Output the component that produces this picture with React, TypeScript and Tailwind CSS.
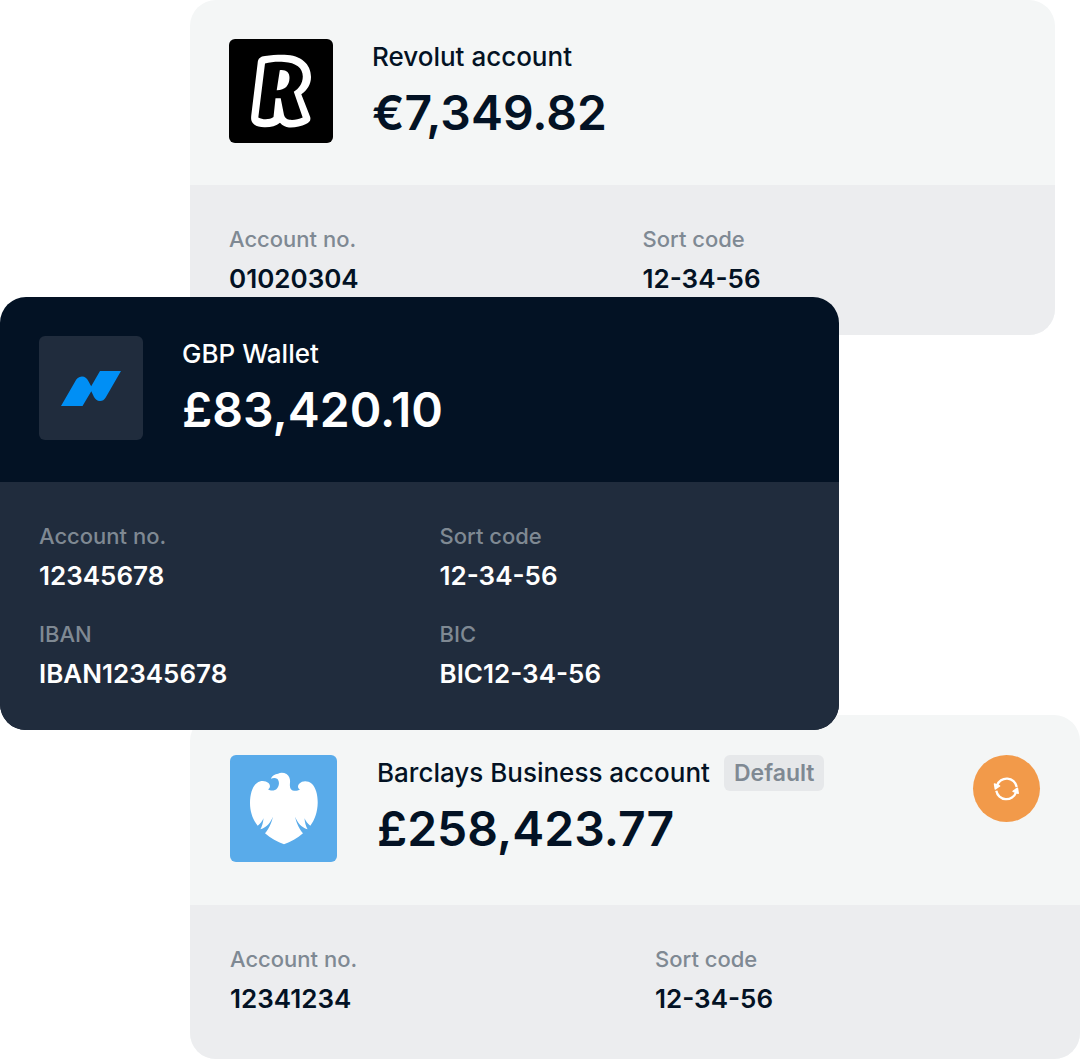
import type { ReactNode } from "react";

type Field = { label: string; value: string };

function RevolutLogo() {
  return (
    <svg viewBox="0 0 104 104" className="block h-full w-full" role="img" aria-label="Revolut">
      <rect width="104" height="104" rx="6" fill="#000" />
      <path
        fill="#fff"
        d="M28.6 24.5C29 19 31.5 17.5 36 17C42 16 49 15.6 55.5 15.7C72 16 82 25 82 38C82 45.5 78 51.5 72.3 55.2L81 77.5C82.3 81 80.5 83.5 77 85C72 87.5 66 88.8 60 88.5C56.500 88.300 53.500 86.500 51 83.700C47.500 86.800 42 88.200 36.500 88.300C31 88.500 26.500 87.400 23.700 84C21.800 81.500 22 79 22.300 76Z"
      />
      <path
        fill="#000"
        d="M36 24.5C42 22.800 49 22.600 55 23C67 23.700 73.800 29 73.800 37.500C73.800 44.500 69.500 50 64.800 52.800L73.700 78.500C69.500 80.500 64.500 81.300 60.500 80.800C57.500 80.400 56 79 55 76L51.700 59.200H46.500L44.500 78C41 80.500 34.500 81.300 29.300 78.500Z"
      />
      <path fill="#fff" d="M50.800 31.200C57 30.500 60.700 33.500 60.500 39C60.300 46.500 56 51.300 47.700 51.200Z" />
    </svg>
  );
}

function WalletLogo() {
  return (
    <svg viewBox="0 0 104 104" className="block h-full w-full" role="img" aria-label="Wallet">
      <rect width="104" height="104" rx="6" fill="#202c3d" />
      <path
        fill="#008ff5"
        d="M22 70L36 45.700C37.700 42.700 39.500 40.700 43 40.600C46 40.600 47.700 42.200 49.300 44.900L52.200 50.200L61 35H82L66.700 61.400C65.200 63.900 63.500 64.900 61 64.900C58 64.900 56.300 63.200 55 60.900L52.300 55.200L43.500 70Z"
      />
    </svg>
  );
}

function BarclaysLogo() {
  return (
    <svg viewBox="0 0 107 107" className="block h-full w-full" role="img" aria-label="Barclays">
      <rect width="107" height="107" rx="6" fill="#59abea" />
      <path
        fill="#fff"
        d="M40.800 23.800C42 20.500 45 19.200 48 18.700C50.500 17.400 54 17.700 56.500 19C59.500 21 60.400 24.500 60 28C59.500 32 60.300 35.500 64 35.700C66 35.900 68.500 35.500 70 34.500C67.500 33.500 67.500 30.500 69.200 28.700C72.500 25.200 78 25.500 81.500 28.500C86 32.500 87.800 40 87.700 48C87.600 57 84.500 65.500 80.300 70.700C77.500 68.500 75.700 66 74.500 63.200C74.700 67 76 71.500 77.600 74.300C71 72.500 67.500 67.500 65 61.800C66.500 68 69.500 74.500 73 78.300C67.500 83 60.500 87 54 89.200C47.500 87 40.500 83 35 78.300C38.500 74.500 41.500 68 43 61.800C40.500 67.500 37 72.500 30.400 74.300C32 71.500 33.300 67 33.500 63.200C32.300 66 30.500 68.500 27.700 70.700C23 65 20 57 20 48C20 39 22.500 31 27 28C30.500 25.200 35.500 25.500 38.500 28C40.500 30 40.500 33 38 34.200C40.500 36.200 45 36 47 33.500C49.500 30.500 49.500 26.500 47.500 24C45.500 22.500 43 22.700 40.800 23.800Z"
      />
    </svg>
  );
}

function RefreshIcon() {
  return (
    <svg viewBox="0 0 28 28" className="h-7 w-7" fill="none" aria-hidden="true">
      <path d="M4 10.500A10.200 10.200 0 0 1 23.700 12" stroke="#fff" strokeWidth="2.300" />
      <path d="M3.300 15.800A10.200 10.200 0 0 0 23 17.300" stroke="#fff" strokeWidth="2.300" />
      <path d="M1.500 8.900L6.600 10.900L2.300 14Z" fill="#fff" stroke="#fff" strokeWidth="1.500" strokeLinejoin="round" />
      <path d="M25.200 18.300L20.100 16.300L24.400 13.200Z" fill="#fff" stroke="#fff" strokeWidth="1.500" strokeLinejoin="round" />
    </svg>
  );
}

function Summary({ title, amount, badge }: { title: string; amount: string; badge?: string }) {
  return (
    <div className="flex-1">
      <div className="flex items-center gap-[14px]">
        <h2 className="text-[26px] leading-9 font-medium whitespace-nowrap">{title}</h2>
        {badge && (
          <span className="rounded-md bg-[#e6e8ea] px-[10px] text-[23px] leading-9 font-semibold text-[#7f8993]">
            {badge}
          </span>
        )}
      </div>
      <p className="text-5xl leading-[76px] font-semibold">{amount}</p>
    </div>
  );
}

function Details({ fields, className }: { fields: Field[]; className: string }) {
  return (
    <dl className={`grid grid-cols-2 gap-x-10 gap-y-[18px] ${className}`}>
      {fields.map((f) => (
        <div key={f.label}>
          <dt className="text-[22px] leading-8 font-medium text-[#7f8993]">{f.label}</dt>
          <dd className="text-[26px] leading-[48px] font-semibold">{f.value}</dd>
        </div>
      ))}
    </dl>
  );
}

function Card({ className, children }: { className: string; children: ReactNode }) {
  return <section className={`relative overflow-hidden rounded-[26px] ${className}`}>{children}</section>;
}

export default function App() {
  return (
    <main className="bg-white font-['Inter',sans-serif] text-[#031224]">
      <Card className="mr-[25px] ml-[190px] bg-[#f4f6f6]">
        <header className="flex gap-[39px] px-[39px] pt-[39px] pb-[34px]">
          <div className="h-[104px] w-[104px]">
            <RevolutLogo />
          </div>
          <Summary title="Revolut account" amount="€7,349.82" />
        </header>
        <Details
          className="bg-[#ecedef] px-[39px] pt-[38px] pb-8"
          fields={[
            { label: "Account no.", value: "01020304" },
            { label: "Sort code", value: "12-34-56" },
          ]}
        />
      </Card>

      <Card className="z-10 -mt-[38px] mr-[241px] bg-[#031224] text-white">
        <header className="flex gap-[39px] px-[39px] pt-[39px] pb-[34px]">
          <div className="h-[104px] w-[104px]">
            <WalletLogo />
          </div>
          <Summary title="GBP Wallet" amount="£83,420.10" />
        </header>
        <Details
          className="bg-[#202c3d] px-[39px] pt-[38px] pb-8"
          fields={[
            { label: "Account no.", value: "12345678" },
            { label: "Sort code", value: "12-34-56" },
            { label: "IBAN", value: "IBAN12345678" },
            { label: "BIC", value: "BIC12-34-56" },
          ]}
        />
      </Card>

      <Card className="-mt-[15px] ml-[190px] bg-[#f4f6f6]">
        <header className="flex gap-10 px-10 pt-10 pb-[38px]">
          <div className="h-[107px] w-[107px]">
            <BarclaysLogo />
          </div>
          <Summary title="Barclays Business account" amount="£258,423.77" badge="Default" />
          <button
            type="button"
            aria-label="Refresh account"
            className="flex h-[67px] w-[67px] items-center justify-center rounded-full bg-[#f29a4a]"
          >
            <RefreshIcon />
          </button>
        </header>
        <Details
          className="bg-[#ecedef] px-10 pt-[38px] pb-9"
          fields={[
            { label: "Account no.", value: "12341234" },
            { label: "Sort code", value: "12-34-56" },
          ]}
        />
      </Card>
    </main>
  );
}
